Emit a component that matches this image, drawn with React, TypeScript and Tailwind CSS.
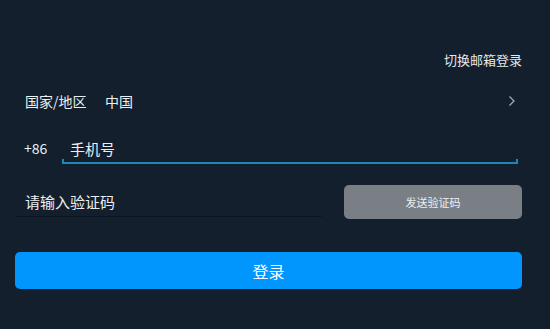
import { useState } from 'react';

const font = { fontFamily: '"Noto Sans CJK SC", "Noto Sans", sans-serif' };

export default function App() {
  const [phone, setPhone] = useState('');
  const [code, setCode] = useState('');

  return (
    <div className="w-[550px] h-[329px] bg-[#131f2c] text-[#eceef0] overflow-hidden" style={font}>
      <div className="flex flex-col pl-[15px] pr-[28px]">
        <div className="h-[46px]" />
        <div className="flex justify-end h-[26px] items-center">
          <button className="text-[13px] text-[#e6e8ea] leading-none">切换邮箱登录</button>
        </div>
        {/* country */}
        <div className="flex items-center h-[56px] pl-[10px] pr-[6px] pt-[2px]">
          <span className="text-[14px] w-[80px]">国家/地区</span>
          <span className="text-[14px]">中国</span>
          <svg className="ml-auto" width="8" height="12" viewBox="0 0 8 12" fill="none">
            <path d="M1.5 1.5 L6 6 L1.5 10.5" stroke="#a9b0b8" strokeWidth="1.2" />
          </svg>
        </div>
        {/* phone */}
        <div className="flex items-end h-[34px] pl-[9px] mr-[4px]">
          <span className="text-[14px] w-[38px] pb-[3px]">+86</span>
          <div className="relative flex-1 h-full flex items-end">
            <input
              value={phone}
              onChange={(e) => setPhone(e.target.value)}
              placeholder="手机号"
              className="w-full bg-transparent outline-none text-[15px] pl-[8px] pb-[2px] placeholder:text-[#eceef0]"
            />
            <div className="absolute left-0 right-0 bottom-[-2px] h-[2px] bg-[#1e86b4]" />
            <div className="absolute left-0 bottom-[-2px] w-[2px] h-[5px] bg-[#1e86b4]" />
            <div className="absolute right-0 bottom-[-2px] w-[2px] h-[5px] bg-[#1e86b4]" />
          </div>
        </div>
        {/* code */}
        <div className="flex items-center mt-[23px] h-[34px]">
          <div className="w-[307px] h-[30px] flex items-center border-b border-[#0c1620] mr-[22px]">
            <input
              value={code}
              onChange={(e) => setCode(e.target.value)}
              placeholder="请输入验证码"
              className="w-full bg-transparent outline-none text-[15px] pl-[10px] pt-[2px] placeholder:text-[#eceef0]"
            />
          </div>
          <button className="flex-1 h-[34px] rounded-[5px] bg-[#7a7e85] text-[11px] text-[#eef0f2]">
            发送验证码
          </button>
        </div>
        {/* login */}
        <button className="mt-[33px] h-[37px] rounded-[5px] bg-[#0096fe] text-[16px] text-white">
          登录
        </button>
      </div>
    </div>
  );
}
